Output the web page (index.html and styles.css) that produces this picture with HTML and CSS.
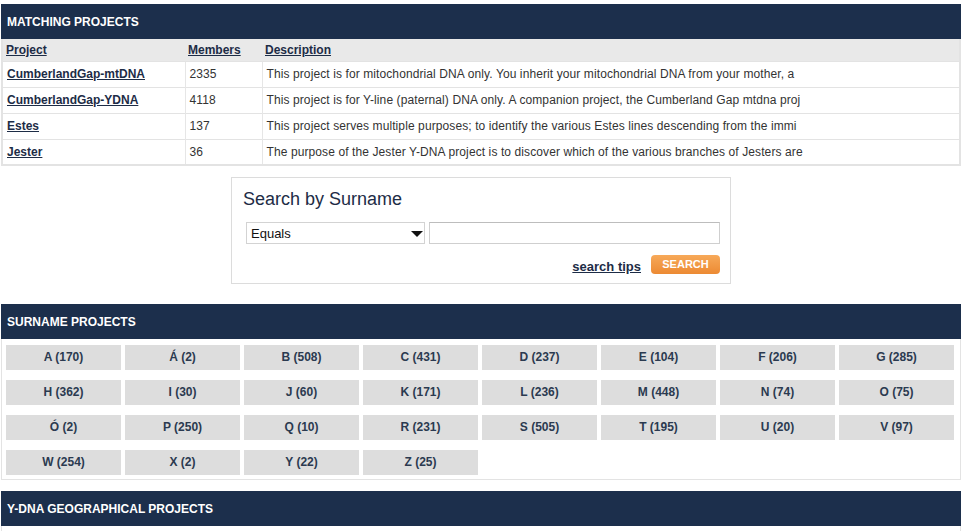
FILE: index.html
```html
<!DOCTYPE html>
<html>
<head>
<meta charset="utf-8">
<link rel="stylesheet" href="styles.css">
</head>
<body>
<div class="page">
  <section class="panel">
    <h2 class="bar">MATCHING PROJECTS</h2>
    <table class="projects">
      <thead>
        <tr>
          <th class="c1"><a href="#">Project</a></th>
          <th class="c2"><a href="#">Members</a></th>
          <th class="c3"><a href="#">Description</a></th>
        </tr>
      </thead>
      <tbody>
        <tr>
          <td class="c1"><a href="#">CumberlandGap-mtDNA</a></td>
          <td class="c2">2335</td>
          <td class="c3">This project is for mitochondrial DNA only. You inherit your mitochondrial DNA from your mother, a</td>
        </tr>
        <tr>
          <td class="c1"><a href="#">CumberlandGap-YDNA</a></td>
          <td class="c2">4118</td>
          <td class="c3">This project is for Y-line (paternal) DNA only. A companion project, the Cumberland Gap mtdna proj</td>
        </tr>
        <tr>
          <td class="c1"><a href="#">Estes</a></td>
          <td class="c2">137</td>
          <td class="c3">This project serves multiple purposes; to identify the various Estes lines descending from the immi</td>
        </tr>
        <tr>
          <td class="c1"><a href="#">Jester</a></td>
          <td class="c2">36</td>
          <td class="c3">The purpose of the Jester Y-DNA project is to discover which of the various branches of Jesters are</td>
        </tr>
      </tbody>
    </table>
  </section>

  <div class="search">
    <h3 class="search-title">Search by Surname</h3>
    <div class="search-fields">
      <div class="select-wrap">
        <select class="select"><option>Equals</option></select>
        <span class="arrow"></span>
      </div>
      <input class="input" type="text">
    </div>
    <div class="search-actions">
      <a class="tips" href="#">search tips</a>
      <button class="btn">SEARCH</button>
    </div>
  </div>

  <section class="panel surname">
    <h2 class="bar">SURNAME PROJECTS</h2>
    <div class="letters">
      <a href="#" class="letter">A (170)</a>
      <a href="#" class="letter">Á (2)</a>
      <a href="#" class="letter">B (508)</a>
      <a href="#" class="letter">C (431)</a>
      <a href="#" class="letter">D (237)</a>
      <a href="#" class="letter">E (104)</a>
      <a href="#" class="letter">F (206)</a>
      <a href="#" class="letter">G (285)</a>
      <a href="#" class="letter">H (362)</a>
      <a href="#" class="letter">I (30)</a>
      <a href="#" class="letter">J (60)</a>
      <a href="#" class="letter">K (171)</a>
      <a href="#" class="letter">L (236)</a>
      <a href="#" class="letter">M (448)</a>
      <a href="#" class="letter">N (74)</a>
      <a href="#" class="letter">O (75)</a>
      <a href="#" class="letter">Ó (2)</a>
      <a href="#" class="letter">P (250)</a>
      <a href="#" class="letter">Q (10)</a>
      <a href="#" class="letter">R (231)</a>
      <a href="#" class="letter">S (505)</a>
      <a href="#" class="letter">T (195)</a>
      <a href="#" class="letter">U (20)</a>
      <a href="#" class="letter">V (97)</a>
      <a href="#" class="letter">W (254)</a>
      <a href="#" class="letter">X (2)</a>
      <a href="#" class="letter">Y (22)</a>
      <a href="#" class="letter">Z (25)</a>
    </div>
  </section>

  <section class="panel ydna">
    <h2 class="bar">Y-DNA GEOGRAPHICAL PROJECTS</h2>
    <div class="ydna-body"></div>
  </section>
</div>
</body>
</html>
```

FILE: styles.css
```css
* { box-sizing: border-box; }
html, body { margin: 0; padding: 0; background: #fff; }
body {
  font-family: "Liberation Sans", Arial, sans-serif;
  font-size: 12px;
  color: #333;
}
.page {
  width: 960px;
  margin-left: 1px;
  padding-top: 4px;
}
.bar {
  margin: 0;
  height: 35px;
  line-height: 36px;
  padding-left: 6px;
  background: #1c2f4c;
  color: #fff;
  font-size: 12px;
  font-weight: bold;
}
a { color: #1d2c46; }

/* projects table */
.projects {
  width: 960px;
  border-collapse: collapse;
  border: 2px solid #e3e3e3;
  border-top: 0;
  table-layout: fixed;
}
.projects thead tr { height: 22px; }
.projects tbody tr { height: 26px; }
.projects th {
  background: #e9e9e9;
  text-align: left;
  font-weight: bold;
  padding: 0 3px;
}
.projects th a { font-weight: bold; }
.projects td {
  padding: 0 4px 0 4px;
  border-top: 1px solid #e3e3e3;
  border-left: 1px solid #e6e6e6;
  white-space: nowrap;
  overflow: hidden;
  color: #333;
}
.projects td.c2, .projects td.c3 { letter-spacing: 0.1px; }
.projects td.c1 { border-left: 0; }
.projects td a { font-weight: bold; }
.projects .c1 { width: 183px; }
.projects .c2 { width: 77px; }

/* search */
.search {
  width: 500px;
  height: 107px;
  margin: 11px auto 0;
  border: 1px solid #dcdcdc;
  padding: 11px 10px 0 11px;
}
.search-title {
  margin: 0;
  font-size: 18px;
  font-weight: normal;
  color: #1d2c46;
  line-height: 21px;
}
.search-fields {
  display: flex;
  gap: 4px;
  margin-top: 12px;
  padding-left: 3px;
}
.select-wrap {
  position: relative;
  width: 179px;
  height: 22px;
}
.select {
  appearance: none;
  -webkit-appearance: none;
  width: 100%;
  height: 22px;
  border: 1px solid #d3d3d3;
  background: #fff;
  font-family: "Liberation Sans", Arial, sans-serif;
  font-size: 13px;
  color: #111;
  padding: 0 0 0 4px;
  margin: 0;
  border-radius: 0;
}
.arrow {
  position: absolute;
  right: 2px;
  top: 9px;
  width: 0;
  height: 0;
  border-left: 6px solid transparent;
  border-right: 6px solid transparent;
  border-top: 6px solid #111;
  pointer-events: none;
}
.input {
  width: 291px;
  height: 22px;
  border: 1px solid #cfcfcf;
  border-top-color: #bdbdbd;
  margin: 0;
  padding: 0;
}
.search-actions {
  display: flex;
  justify-content: flex-end;
  align-items: center;
  gap: 10px;
  margin-top: 11px;
}
.tips {
  font-size: 13px;
  font-weight: bold;
  margin-top: 4px;
}
.btn {
  width: 69px;
  height: 19px;
  border: 0;
  border-radius: 4px;
  background: linear-gradient(#f7a959, #ec8a33);
  color: #fff;
  font-family: "Liberation Sans", Arial, sans-serif;
  font-size: 11px;
  font-weight: bold;
  padding: 0;
  line-height: 17px;
}

/* surname projects */
.surname { margin-top: 20px; }
.letters {
  display: grid;
  grid-template-columns: repeat(8, 115px);
  column-gap: 4px;
  row-gap: 10px;
  padding: 6px 4px 4px 4px;
  border: 1px solid #e3e3e3;
  border-top: 0;
}
.letter {
  display: block;
  height: 25px;
  line-height: 25px;
  text-align: center;
  background: #dddddd;
  color: #2b3a50;
  font-weight: bold;
  font-size: 12px;
  text-decoration: none;
}

.ydna { margin-top: 11px; }
.ydna-body {
  height: 20px;
  border: 1px solid #e3e3e3;
  border-top: 0;
}
```
